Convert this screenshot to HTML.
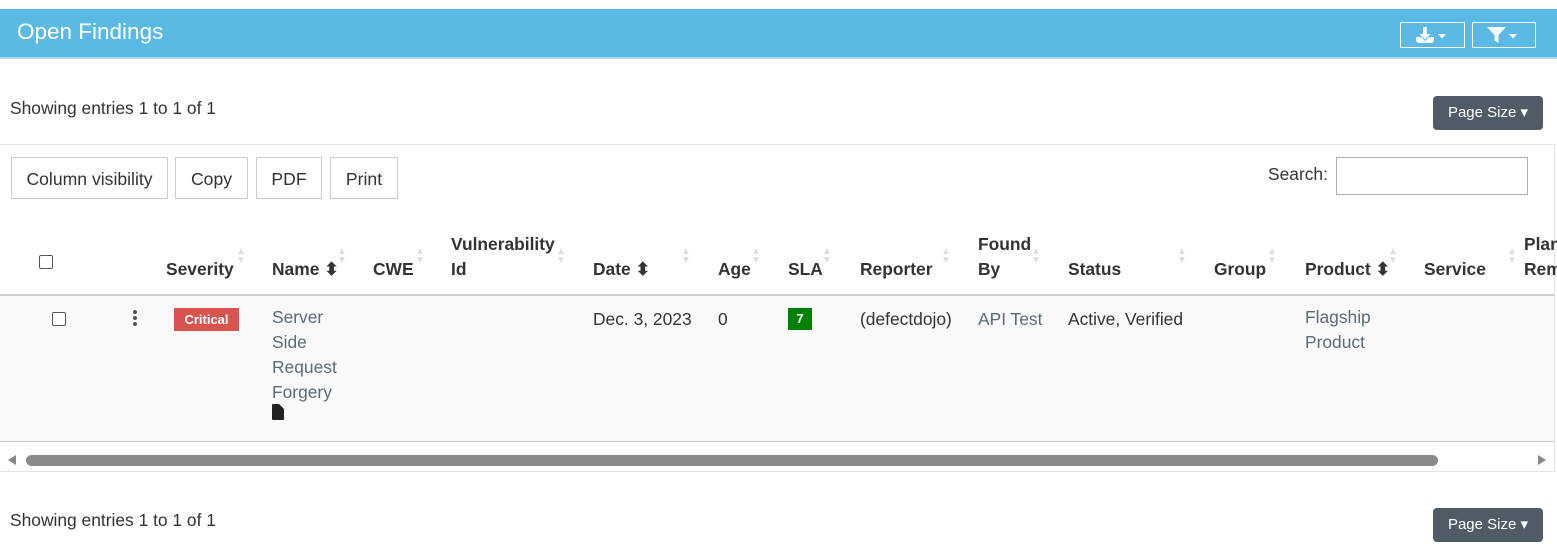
<!DOCTYPE html>
<html><head><meta charset="utf-8"><style>
body{margin:0;width:1557px;height:548px;background:#fff;font-family:"Liberation Sans",Arial,sans-serif;color:#333;position:relative;overflow:hidden;font-size:17.4px}
.a{position:absolute;white-space:nowrap}
.bar{left:0;top:9px;width:1557px;height:48px;background:#5bbae4;border-bottom:2px solid #a8d9ee}
.hb{top:22px;height:26px;border:1px solid #fff;box-sizing:border-box}
.ps{background:#4f5b66;color:#fff;border-radius:4px;font-size:15px;width:110px;height:34px;line-height:34px;text-align:center}
.btn{top:157px;height:42px;line-height:42px;border:1px solid #ccc;box-sizing:border-box;padding:0 14px;font-size:17.6px;color:#333;background:#fff}
.th{font-weight:bold;font-size:17.4px;color:#333}
.so{color:#ddd;font-size:10px;line-height:9px}
.cb{width:12px;height:12px;border:1px solid #555;border-radius:2px;background:#fff}
.td{top:309px;font-size:17.4px;color:#333}
.lk{color:#5b6b7a}
</style></head><body>
<div class="a bar"></div>
<div class="a" style="left:17px;top:19px;color:#fff;font-size:22.5px">Open Findings</div>
<div class="a hb" style="left:1400px;width:65px"><svg width="63" height="24"><path d="M22 4h4v7h3.5l-5.5 5.5-5.5-5.5h3.5z" fill="#fff"/><path d="M15 14h5l4 4 4-4h5v3a3 3 0 0 1-3 3H18a3 3 0 0 1-3-3z" fill="#fff"/><path d="M37 11h8l-4 4.5z" fill="#fff"/></svg></div>
<div class="a hb" style="left:1472px;width:64px"><svg width="62" height="24"><path d="M14 4h19l-7.5 8v8l-4-2.5v-5.5z" fill="#fff"/><path d="M36 11h8l-4 4.5z" fill="#fff"/></svg></div>
<div class="a" style="left:10px;top:98px">Showing entries 1 to 1 of 1</div>
<div class="a ps" style="left:1433px;top:96px">Page Size ▾</div>
<div class="a" style="left:0;top:144px;width:1554px;height:326px;border:1px solid #e5e5e5;border-left:none"></div>
<div class="a btn" style="left:11px;width:157px;padding:0;text-align:center">Column visibility</div>
<div class="a btn" style="left:175px;width:73px;padding:0;text-align:center">Copy</div>
<div class="a btn" style="left:256px;width:66px;padding:0;text-align:center">PDF</div>
<div class="a btn" style="left:330px;width:68px;padding:0;text-align:center">Print</div>
<div class="a" style="left:1268px;top:164px">Search:</div>
<div class="a" style="left:1336px;top:157px;width:192px;height:38px;border:1px solid #aaa;box-sizing:border-box"></div>
<div class="a cb" style="left:39px;top:255px"></div>
<div class="a th" style="left:166px;top:259px">Severity</div>
<div class="a th" style="left:272px;top:259px">Name ⬍</div>
<div class="a th" style="left:373px;top:259px">CWE</div>
<div class="a th" style="left:451px;top:232px;line-height:25px">Vulnerability<br>Id</div>
<div class="a th" style="left:593px;top:259px">Date ⬍</div>
<div class="a th" style="left:718px;top:259px">Age</div>
<div class="a th" style="left:788px;top:259px">SLA</div>
<div class="a th" style="left:860px;top:259px">Reporter</div>
<div class="a th" style="left:978px;top:232px;line-height:25px">Found<br>By</div>
<div class="a th" style="left:1068px;top:259px">Status</div>
<div class="a th" style="left:1214px;top:259px">Group</div>
<div class="a th" style="left:1305px;top:259px">Product ⬍</div>
<div class="a th" style="left:1424px;top:259px">Service</div>
<div class="a th" style="left:1524px;top:232px;line-height:25px">Plan<br>Rem</div>
<div class="a so" style="left:236px;top:247px">▲<br>▼</div>
<div class="a so" style="left:337px;top:247px">▲<br>▼</div>
<div class="a so" style="left:415px;top:247px">▲<br>▼</div>
<div class="a so" style="left:556px;top:247px">▲<br>▼</div>
<div class="a so" style="left:681px;top:247px">▲<br>▼</div>
<div class="a so" style="left:751px;top:247px">▲<br>▼</div>
<div class="a so" style="left:822px;top:247px">▲<br>▼</div>
<div class="a so" style="left:941px;top:247px">▲<br>▼</div>
<div class="a so" style="left:1031px;top:247px">▲<br>▼</div>
<div class="a so" style="left:1177px;top:247px">▲<br>▼</div>
<div class="a so" style="left:1267px;top:247px">▲<br>▼</div>
<div class="a so" style="left:1388px;top:247px">▲<br>▼</div>
<div class="a so" style="left:1507px;top:247px">▲<br>▼</div>
<div class="a" style="left:0;top:294px;width:1554px;height:148px;background:#f9f9f9;border-top:2px solid #ccc;border-bottom:1px solid #ccc;box-sizing:border-box"></div>
<div class="a cb" style="left:52px;top:312px"></div>
<div class="a" style="left:133px;top:310px;width:4px"><div style="width:4px;height:4px;border-radius:2px;background:#555;margin-bottom:2px"></div><div style="width:4px;height:4px;border-radius:2px;background:#555;margin-bottom:2px"></div><div style="width:4px;height:4px;border-radius:2px;background:#555"></div></div>
<div class="a" style="left:174px;top:308px;width:65px;height:23px;background:#d9534f;color:#fff;font-weight:bold;font-size:13px;line-height:23px;text-align:center">Critical</div>
<div class="a td lk" style="left:272px;line-height:25px;top:305px">Server<br>Side<br>Request<br>Forgery</div>
<svg class="a" style="left:272px;top:404px" width="12" height="16"><path d="M0 1q0-1 1-1h6l5 5v10q0 1-1 1H1q-1 0-1-1z" fill="#222"/></svg>
<div class="a td" style="left:593px">Dec. 3, 2023</div>
<div class="a td" style="left:718px">0</div>
<div class="a" style="left:788px;top:308px;width:24px;height:22px;background:#008000;color:#fff;font-weight:bold;font-size:13px;line-height:22px;text-align:center">7</div>
<div class="a td" style="left:860px">(defectdojo)</div>
<div class="a td lk" style="left:978px">API Test</div>
<div class="a td" style="left:1068px">Active, Verified</div>
<div class="a td lk" style="left:1305px;line-height:25px;top:305px">Flagship<br>Product</div>
<div class="a" style="left:0;top:448px;width:1554px;height:22px;background:#fff"></div>
<div class="a" style="left:8px;top:455px;width:0;height:0;border-top:5px solid transparent;border-bottom:5px solid transparent;border-right:8px solid #888"></div>
<div class="a" style="left:1538px;top:455px;width:0;height:0;border-top:5px solid transparent;border-bottom:5px solid transparent;border-left:8px solid #888"></div>
<div class="a" style="left:26px;top:455px;width:1412px;height:11px;border-radius:6px;background:#8a8a8a"></div>
<div class="a" style="left:10px;top:510px">Showing entries 1 to 1 of 1</div>
<div class="a ps" style="left:1433px;top:508px">Page Size ▾</div>
</body></html>
